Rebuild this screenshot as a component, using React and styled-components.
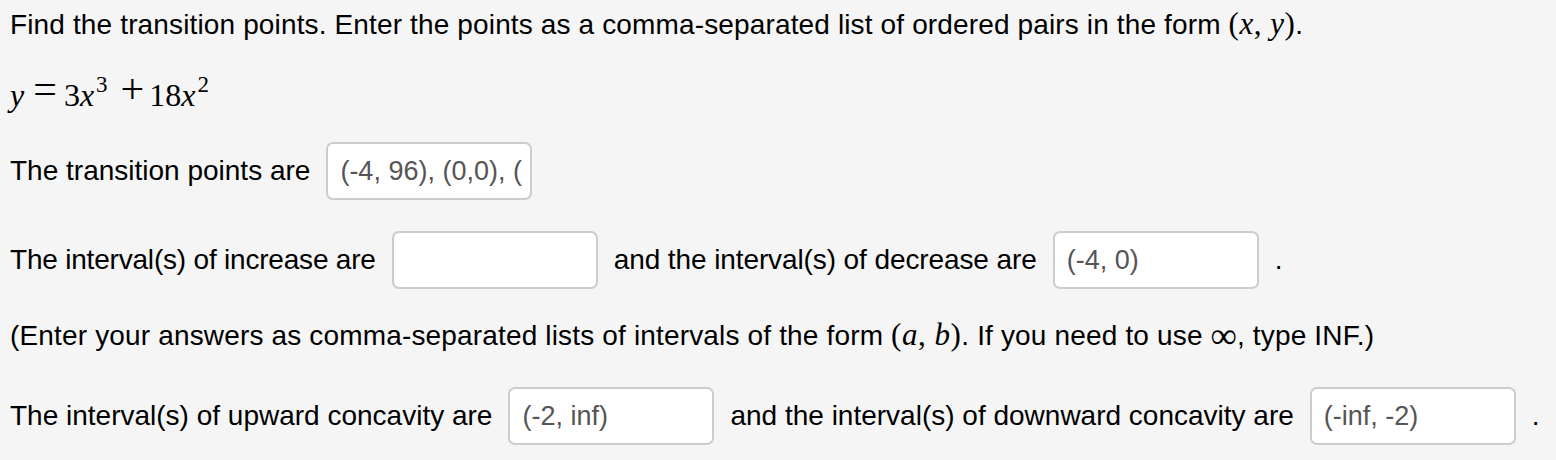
import React from "react";
import styled, { createGlobalStyle } from "styled-components";

const GlobalStyle = createGlobalStyle`
  html, body {
    margin: 0;
    padding: 0;
    background: #f5f5f5;
  }
  body {
    font-family: "Liberation Sans", Arial, Helvetica, sans-serif;
    color: #000;
  }
`;

const App = () => {
  return (
    <Page>
      <GlobalStyle />
      <Para>
        Find the transition points. Enter the points as a comma-separated list
        of ordered pairs in the form{" "}
        <MathInline>
          (<Var>x</Var>, <Var>y</Var>)
        </MathInline>
        .
      </Para>
      <Formula>
        <FVar $right={9}>y</FVar>
        <Op $right={7}>=</Op>
        <span>3</span>
        <FVar $left={0} $right={2}>x</FVar>
        <Sup $right={13}>3</Sup>
        <Op $right={5}>+</Op>
        <span>18</span>
        <FVar $left={0} $right={2}>x</FVar>
        <Sup>2</Sup>
      </Formula>

      <Row $top={27}>
        <Label>The transition points are</Label>
        <Answer value="(-4, 96), (0,0), (" />
      </Row>

      <Row $top={31}>
        <Label $ls={-0.2}>The interval(s) of increase are</Label>
        <Answer value="" />
        <Label $ls={-0.1}>and the interval(s) of decrease are</Label>
        <Answer value="(-4, 0)" />
        <Label>.</Label>
      </Row>

      <Note>
        (Enter your answers as comma-separated lists of intervals of the form{" "}
        <MathInline>
          (<Var>a</Var>, <Var>b</Var>)
        </MathInline>
        . If you need to use <Infinity>∞</Infinity>, type INF.)
      </Note>

      <Row $top={36}>
        <Label>The interval(s) of upward concavity are</Label>
        <Answer value="(-2, inf)" />
        <Label>and the interval(s) of downward concavity are</Label>
        <Answer value="(-inf, -2)" />
        <Label>.</Label>
      </Row>
    </Page>
  );
};

const Answer = ({ value }) => <Input type="text" defaultValue={value} readOnly />;

export default App;

const Page = styled.div`
  padding: 8px 10px 0 10px;
  font-size: 28px;
`;

const Para = styled.div`
  line-height: 32px;
  height: 32px;
  letter-spacing: 0.14px;
  white-space: nowrap;
`;

const MathInline = styled.span`
  font-family: "Liberation Serif", "Times New Roman", serif;
  font-size: 31px;
  letter-spacing: 0.5px;
`;

const Var = styled.i`
  font-family: "Liberation Serif", "Times New Roman", serif;
  font-style: italic;
`;

const Formula = styled.div`
  margin-top: 35px;
  font-family: "Liberation Serif", "Times New Roman", serif;
  font-size: 32px;
  line-height: 40px;
  height: 40px;
  white-space: nowrap;
`;

const FVar = styled.i`
  font-style: italic;
  font-size: 32px;
  margin-left: ${(p) => p.$left || 0}px;
  margin-right: ${(p) => p.$right || 0}px;
`;

const Op = styled.span`
  display: inline-block;
  font-size: 42px;
  line-height: 0;
  vertical-align: 3px;
  margin-right: ${(p) => p.$right || 0}px;
`;

const Sup = styled.span`
  font-size: 23px;
  line-height: 0;
  vertical-align: 14px;
  margin-right: ${(p) => p.$right || 0}px;
`;

const Row = styled.div`
  display: flex;
  align-items: center;
  gap: 16px;
  margin-top: ${(p) => p.$top}px;
  height: 58px;
  white-space: nowrap;
`;

const Label = styled.span`
  line-height: 32px;
  letter-spacing: ${(p) => p.$ls || 0}px;
`;

const Input = styled.input`
  box-sizing: border-box;
  width: 206px;
  height: 58px;
  padding: 0 6px 0 12px;
  border: 2px solid #cccccc;
  border-radius: 7px;
  background: #fff;
  font-family: "Liberation Sans", Arial, Helvetica, sans-serif;
  font-size: 27px;
  color: #555;
  outline: none;
`;

const Note = styled.div`
  margin-top: 30px;
  line-height: 32px;
  height: 32px;
  letter-spacing: 0.16px;
  white-space: nowrap;
`;

const Infinity = styled.span`
  font-family: "Liberation Serif", "Times New Roman", serif;
  font-size: 37px;
  line-height: 0;
  vertical-align: -3px;
  letter-spacing: 0;
`;
